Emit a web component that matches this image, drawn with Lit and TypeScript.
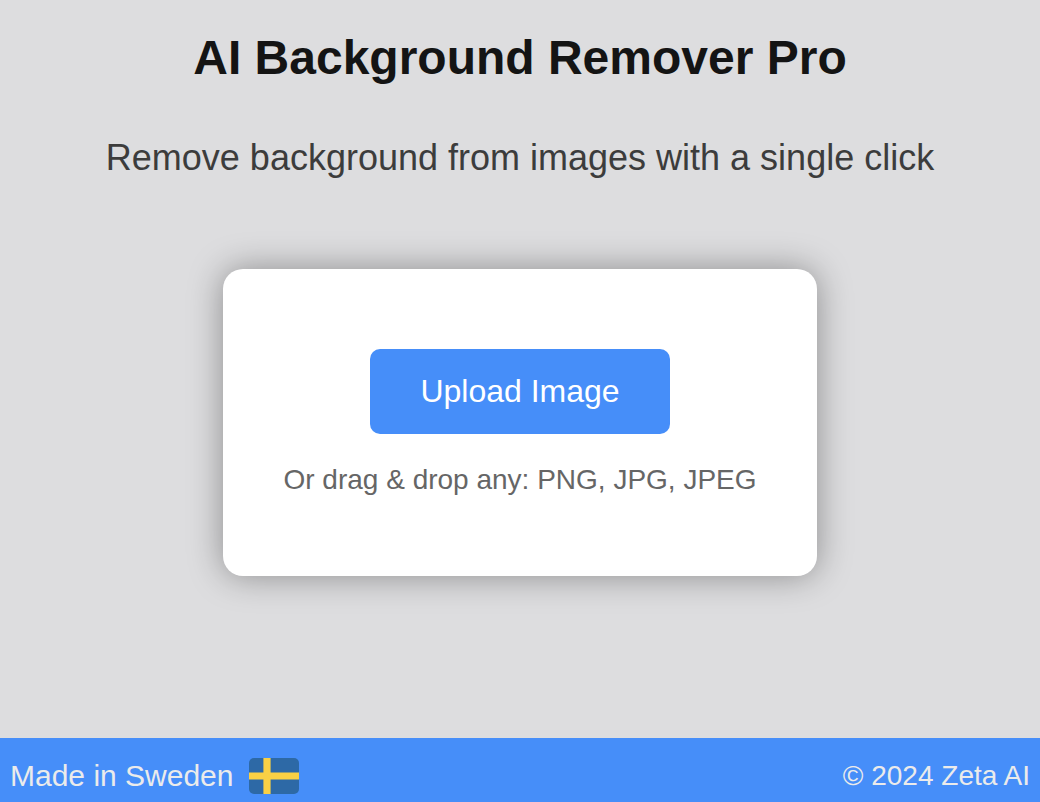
import { LitElement, html, css } from "lit";
import { customElement } from "lit/decorators.js";

@customElement("app-root")
export class AppRoot extends LitElement {
  static styles = css`
    :host {
      display: flex;
      flex-direction: column;
      min-height: 100vh;
      background: #dddddf;
      font-family: "Liberation Sans", Arial, sans-serif;
    }
    main {
      flex: 1;
      display: flex;
      flex-direction: column;
      align-items: center;
      padding: 30px 20px;
      text-align: center;
    }
    h1 {
      margin: 0;
      font-size: 48px;
      line-height: 56px;
      color: #141414;
    }
    .tagline {
      margin: 50px 0 0;
      font-size: 36px;
      line-height: 44px;
      color: #3c3c3c;
    }
    .card {
      box-sizing: border-box;
      margin-top: 89px;
      padding: 80px 60px;
      border-radius: 20px;
      background: #fff;
      box-shadow: 0 0 34px rgba(0, 0, 0, 0.37);
    }
    button {
      padding: 24px 50px;
      border: 0;
      border-radius: 10px;
      background: #468ef9;
      color: #fff;
      font: 32px/37px "Liberation Sans", Arial, sans-serif;
      cursor: pointer;
    }
    .hint {
      margin: 30px 0 0;
      font-size: 28px;
      line-height: 32px;
      color: #666;
    }
    footer {
      display: flex;
      align-items: center;
      justify-content: space-between;
      padding: 20px 10px 8px;
      background: #468ef9;
      color: #ebebeb;
      font-size: 30px;
      line-height: 34px;
    }
    .origin {
      display: flex;
      align-items: center;
      gap: 16px;
    }
    .copyright {
      font-size: 28px;
    }
    svg {
      display: block;
    }
  `;

  render() {
    return html`
      <main>
        <h1>AI Background Remover Pro</h1>
        <p class="tagline">Remove background from images with a single click</p>
        <section class="card">
          <button type="button">Upload Image</button>
          <p class="hint">Or drag &amp; drop any: PNG, JPG, JPEG</p>
        </section>
      </main>
      <footer>
        <span class="origin">
          Made in Sweden
          <svg width="50" height="36" viewBox="0 0 50 36" role="img" aria-label="Swedish flag">
            <rect width="50" height="36" rx="5" fill="#2d69a6" />
            <path d="M14.4 0h7.2v36h-7.2zM0 14.5h50v7H0z" fill="#f9d045" />
          </svg>
        </span>
        <span class="copyright">© 2024 Zeta AI</span>
      </footer>
    `;
  }
}
